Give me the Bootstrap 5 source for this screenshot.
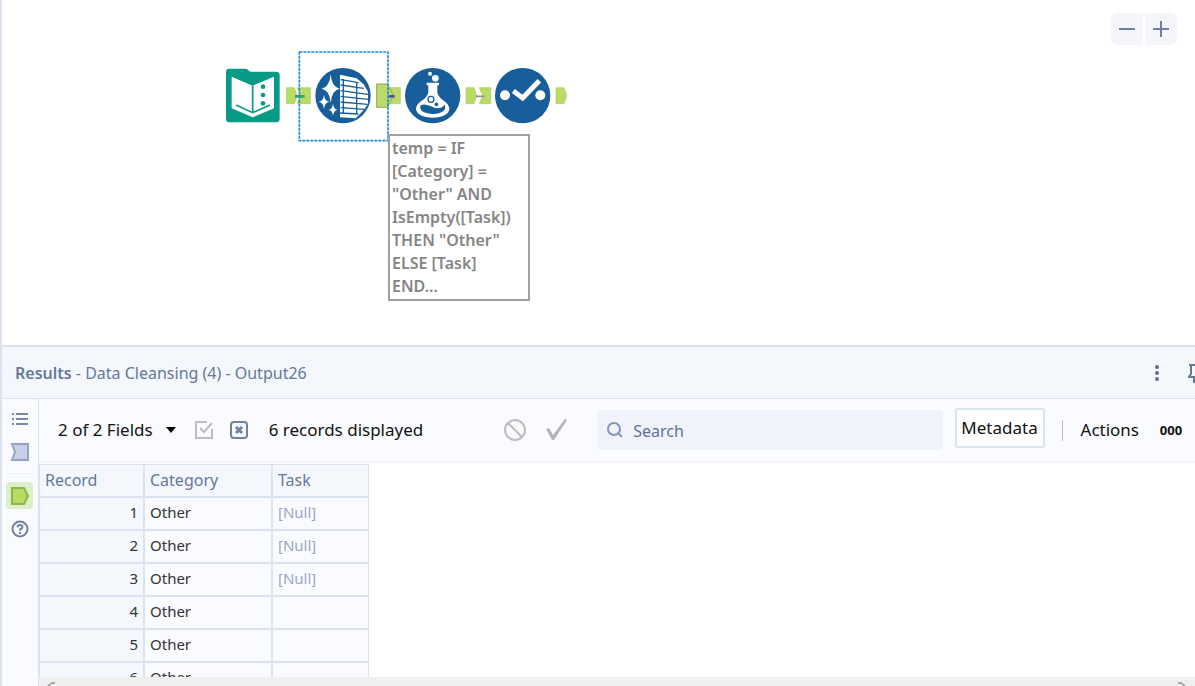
<!DOCTYPE html>
<html lang="en">
<head>
<meta charset="utf-8">
<meta name="viewport" content="width=device-width, initial-scale=1">
<title>Workflow</title>
<link href="https://cdn.jsdelivr.net/npm/bootstrap@5.3.0/dist/css/bootstrap.min.css" rel="stylesheet">
<style>
  :root { --line: #dbe3f1; --slate: #66779a; --pane: #f4f8fd; }
  body { font-family: "Noto Sans", "Open Sans", sans-serif; font-size: 16px; line-height: 24px; color: #111; background: #fff; }
  .shell { border-left: 2px solid var(--line); }
  .canvas { flex: 0 0 345px; }
  .flow { left: 213px; top: 45px; }
  .note { left: 386px; top: 134px; width: 142px; padding: 1px 2px; border: 2px solid #a0a0a0; background: #fff; color: #858585; font-size: 16px; font-weight: 600; line-height: 23px; }
  .zoom { padding: 13px 18px; gap: 2px; }
  .zoom button { width: 32px; height: 32px; background: #f4f6fa; }
  .zoom button:first-child { border-radius: 6px 0 0 6px; }
  .zoom button:last-child { border-radius: 0 6px 6px 0; }
  .plain { border: 0; background: none; padding: 0; color: inherit; display: flex; align-items: center; justify-content: center; flex-shrink: 0; white-space: nowrap; }
  .pane-title { height: 54px; padding-left: 13px; gap: 28px; background: var(--pane); border-top: 2px solid var(--line); border-bottom: 1px solid var(--line); color: var(--slate); }
  .pane-title b { font-weight: 600; }
  .rail { width: 37px; border-right: 1px solid var(--line); background: #fafbfe; padding: 6px 1px 0 0; }
  .rail button { width: 27px; height: 27px; border-radius: 4px; }
  .rail .anchor-in { margin-top: 6px; }
  .rail hr { width: 26px; margin: 8px 0; border-color: #ccd3e3; }
  .rail .on { background: #dcefcb; }
  .rail .help { margin-top: 6px; }
  .scroll-host { min-height: 0; }
  .tools { height: 64px; background: #fafbfe; border-bottom: 2px solid #f3f4f8; padding: 0 12px 0 19px; font-size: 17px; }
  .fields { gap: 13px; }
  .all { margin-left: 18px; }
  .clr { margin-left: 15px; }
  .count { margin-left: 20px; }
  .ban { margin-left: 80px; }
  .ok { margin-left: 18px; }
  .find { height: 40px; margin: 0 12px 0 28px; background: #f0f3f9; border-radius: 4px; padding-left: 9px; gap: 9px; font-size: 16px; }
  .find input { min-width: 0; border: 0; outline: 0; background: none; color: #61729a; padding: 2px 0 0; }
  .find input::placeholder { color: #61729a; opacity: 1; }
  .meta { height: 40px; width: 90px; margin-bottom: 4px; border: 2px solid var(--line); background: #fff; color: #111; border-radius: 2px; }
  .sep { width: 1px; height: 21px; margin: 0 18px 0 17px; background: #bcbcbc; }
  .dots { margin-left: 20px; width: 24px; font-size: 13px; }
  .grid { table-layout: fixed; width: 330px; border-collapse: separate; border-spacing: 0; font-size: 15px; line-height: 21px; margin-top: 1px; }
  .grid th, .grid td { height: 33px; padding: 0 5px 2px; border: 1px solid var(--line); background: #fafbfe; font-weight: 400; color: #333; }
  .grid thead th { padding-bottom: 0; background: var(--pane); color: var(--slate); font-size: 16px; }
  .grid tbody th { background: var(--pane); text-align: right; }
  .grid .void { color: #9aa6c8; }
  .hbar { height: 9px; background: #efefef; }
</style>
</head>
<body>
<div class="shell vh-100 d-flex flex-column overflow-hidden">
  <main class="canvas position-relative">
    <div class="zoom d-flex justify-content-end">
      <button class="plain" aria-label="Zoom out"><svg width="18" height="18" stroke="#6e7f9f" stroke-width="2"><path d="M1 9H17"/></svg></button>
      <button class="plain" aria-label="Zoom in"><svg width="18" height="18" stroke="#6e7f9f" stroke-width="2"><path d="M1 9H17M9 1V17"/></svg></button>
    </div>
    <svg class="flow position-absolute" width="360" height="100" viewBox="0 0 1080 300" role="img" aria-label="Workflow tools">
      <!-- connectors -->
      <g fill="#bbdb67" stroke="#a9cb5c" stroke-width="2">
        <path d="M214 128H238L246 152L238 176H214ZM247 128H286V176H247L257 152Z"/>
        <path d="M525 128H556V176H525L535 152Z"/>
        <path d="M753 128H777L785 152L777 176H753ZM793 128H827V176H793L803 152Z"/>
        <path d="M1023 128H1047L1055 152L1047 176H1023Z"/>
        <path d="M485 117H518L535 152L518 187H485Z" stroke="#8daa4d" stroke-width="3"/>
      </g>
      <g stroke-width="8"><path d="M240 154H269" stroke="#38a34d"/><path d="M522 154H539" stroke="#51529b"/><path d="M783 154H808" stroke="#929292" stroke-width="5"/></g>
      <!-- input tool -->
      <path d="M43 71H90Q96 71 99 75Q103 80 108 80H183Q194 80 194 91V221Q194 232 183 232H43Q33 232 33 222V81Q33 71 43 71Z" fill="#079b85"/>
      <path d="M50 95L113 122L177 95V190L113 217L50 190Z" fill="#fff"/>
      <path d="M113 121V204M63 180L113 203L165 180" fill="none" stroke="#079b85" stroke-width="5"/>
      <g fill="#079b85"><circle cx="144" cy="125" r="7"/><circle cx="144" cy="150" r="7"/><circle cx="144" cy="175" r="7"/></g>
      <!-- data cleansing tool -->
      <circle cx="384" cy="152" r="83" fill="#175e9b"/>
      <g fill="#fff">
        <path d="M347 88Q350 127 374 131Q350 135 347 174Q344 135 320 131Q344 127 347 88Z"/>
        <path d="M327 149Q329 168 343 170Q329 172 327 192Q325 172 311 170Q325 168 327 149Z"/>
        <path d="M354 176Q356 192 367 194Q356 196 354 212Q352 196 341 194Q352 192 354 176Z"/>
        <path d="M375 89L425 100L446 118L459 140V176L447 194L422 220L375 217Z"/>
      </g>
      <path d="M385 102V206M425 110V206M377 104L431 113M377 120L446 130M377 137L459 148M377 154L459 163M377 171L458 178M377 188L448 193M375 204L430 207" fill="none" stroke="#175e9b" stroke-width="4"/>
      <!-- formula tool -->
      <circle cx="653" cy="152" r="83" fill="#175e9b"/>
      <g fill="#fff"><circle cx="661" cy="100" r="10"/><circle cx="645" cy="86" r="6"/><path d="M635 113H672V121H667V143Q671 157 688 169Q703 180 703 192Q699 217 653 218Q607 217 603 192Q603 180 618 169Q636 157 640 143V121H635Z"/></g>
      <path d="M617 181Q630 174 653 186Q675 196 689 179Q698 204 653 207Q609 204 617 181Z" fill="#175e9b"/>
      <circle cx="648" cy="163" r="9" fill="#fff" stroke="#175e9b" stroke-width="4"/><circle cx="664" cy="178" r="7" fill="#175e9b" stroke="#fff" stroke-width="3"/>
      <!-- select tool -->
      <circle cx="923" cy="152" r="83" fill="#175e9b"/>
      <g fill="#fff"><circle cx="870" cy="151" r="15"/><circle cx="976" cy="151" r="15"/></g>
      <path d="M895 138L923 159L973 107" fill="none" stroke="#fff" stroke-width="15"/>
      <rect x="253" y="21" width="266" height="266" fill="none" stroke="#2188d9" stroke-width="5" stroke-dasharray="9 3"/>
    </svg>
    <div class="note position-absolute">temp = IF<br>[Category] =<br>"Other" AND<br>IsEmpty([Task])<br>THEN "Other"<br>ELSE [Task]<br>END...</div>
  </main>

  <section class="scroll-host d-flex flex-column flex-fill overflow-hidden">
    <header class="pane-title d-flex align-items-center flex-shrink-0 overflow-hidden">
      <div class="flex-fill"><b>Results</b> <span>- Data Cleansing (4) - Output26</span></div>
      <button class="plain" aria-label="More"><svg width="6" height="18" fill="#5f7092"><circle cx="3" cy="3" r="2"/><circle cx="3" cy="9" r="2"/><circle cx="3" cy="15" r="2"/></svg></button>
      <button class="plain" aria-label="Pin"><svg width="7" height="22" fill="none" stroke="#66779a" stroke-width="2"><path d="M1 3H8M3 3V12L1 15H8M6 15V21"/></svg></button>
    </header>
    <div class="scroll-host d-flex flex-fill overflow-hidden">
      <nav class="rail d-flex flex-column align-items-center flex-shrink-0">
        <button class="plain" aria-label="Messages"><svg width="18" height="16" stroke="#7b89a9" stroke-width="2"><path d="M1 3H3M5 3H17M1 8H3M5 8H17M1 13H3M5 13H17"/></svg></button>
        <button class="plain anchor-in" aria-label="Input anchor"><svg width="20" height="20"><path d="M2 2H18V18H2L5 10Z" fill="#c5d0e6" stroke="#93a3c5" stroke-width="2"/></svg></button>
        <hr>
        <button class="plain on" aria-label="Output anchor"><svg width="20" height="20"><path d="M2 2H14L18 10L14 18H2Z" fill="#b9da60" stroke="#8eb54c" stroke-width="2"/></svg></button>
        <button class="plain help" aria-label="Help"><svg width="18" height="18" fill="none" stroke="#7382a4" stroke-width="2"><circle cx="9" cy="9" r="7.500"/><path d="M6.500 7.300Q6.500 5 9 5Q11.500 5 11.500 7Q11.500 8.500 9 9.500V10.800M9 12V14"/></svg></button>
      </nav>
      <div class="d-flex flex-column flex-fill overflow-hidden">
        <div class="tools d-flex align-items-center flex-shrink-0">
          <button class="plain fields">2 of 2 Fields <svg width="10" height="6"><path d="M0 0H10L5 6Z"/></svg></button>
          <button class="plain all" aria-label="Select all"><svg width="20" height="20" fill="none" stroke="#bdbdbd" stroke-width="2"><path d="M13 2H2V18H18V9M6 8L10 12L18 3"/></svg></button>
          <button class="plain clr" aria-label="Clear selection"><svg width="20" height="20" fill="none" stroke="#7181a5" stroke-width="2"><rect x="2" y="2" width="16" height="16" rx="3"/><path d="M7 7L13 13M13 7L7 13" stroke-width="3"/></svg></button>
          <span class="count text-nowrap">6 records displayed</span>
          <button class="plain ban" aria-label="Discard"><svg width="24" height="24" fill="none" stroke="#bdbdbd" stroke-width="2"><circle cx="12" cy="12" r="10"/><path d="M5 5L19 19"/></svg></button>
          <button class="plain ok" aria-label="Apply"><svg width="24" height="24"><path d="M1 11L4 10L8 17L20 1L22 2L9 22H7Z" fill="#b5b5b5"/></svg></button>
          <label class="find d-flex align-items-center flex-fill"><svg width="18" height="18" fill="none" stroke="#8396bf" stroke-width="2"><circle cx="8" cy="8" r="6"/><path d="M12 12L16 16"/></svg><input class="flex-fill" type="text" placeholder="Search" aria-label="Search"></label>
          <button class="plain meta">Metadata</button>
          <span class="sep"></span>
          <button class="plain">Actions</button>
          <button class="plain dots"><b>000</b></button>
        </div>
        <div class="scroll-host flex-fill overflow-hidden">
          <table class="grid">
            <colgroup><col style="width:105px"><col style="width:128px"><col style="width:97px"></colgroup>
            <thead><tr><th>Record</th><th>Category</th><th>Task</th></tr></thead>
            <tbody>
              <tr><th>1</th><td>Other</td><td class="void">[Null]</td></tr>
              <tr><th>2</th><td>Other</td><td class="void">[Null]</td></tr>
              <tr><th>3</th><td>Other</td><td class="void">[Null]</td></tr>
              <tr><th>4</th><td>Other</td><td></td></tr>
              <tr><th>5</th><td>Other</td><td></td></tr>
              <tr><th>6</th><td>Other</td><td></td></tr>
            </tbody>
          </table>
        </div>
        <div class="hbar d-flex justify-content-between align-items-end flex-shrink-0 px-2"><svg width="10" height="4"><path d="M1 4L5 1L8 1" fill="none" stroke="#aaa" stroke-width="2"/></svg><svg width="10" height="4"><path d="M1 1H4L8 4" fill="none" stroke="#aaa" stroke-width="2"/></svg></div>
      </div>
    </div>
  </section>
</div>
<script src="https://cdn.jsdelivr.net/npm/bootstrap@5.3.0/dist/js/bootstrap.bundle.min.js"></script>
</body>
</html>
